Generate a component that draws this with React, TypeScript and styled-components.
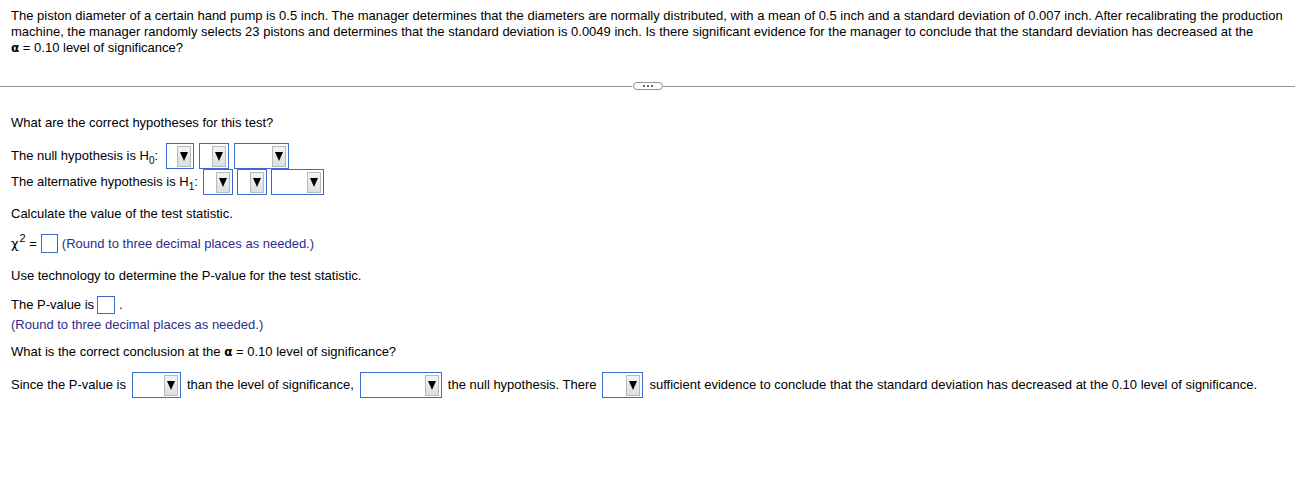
import React from "react";
import styled, { createGlobalStyle } from "styled-components";

const GlobalStyle = createGlobalStyle`
  body {
    margin: 0;
    background: #ffffff;
    font-family: "Liberation Sans", Arial, sans-serif;
    font-size: 13px;
    color: #000000;
  }
`;

const Page = styled.div`
  padding: 8px 8px 0 11px;
  line-height: 16px;
`;

const Question = styled.p`
  margin: 0;
  width: 1276px;
`;

const NoWrap = styled.span`
  white-space: nowrap;
`;

const Divider = styled.div`
  display: flex;
  align-items: center;
  margin: 25px -8px 0 -11px;
  height: 10px;
`;

const Rule = styled.div`
  flex: 1;
  height: 1px;
  background: #8e939b;
`;

const Pill = styled.div`
  width: 28px;
  height: 6px;
  border: 1.5px solid #8e939b;
  border-radius: 5px;
  display: flex;
  align-items: center;
  justify-content: center;
  gap: 2px;
  margin-left: 1px;
`;

const Dot = styled.span`
  width: 2px;
  height: 2px;
  background: #5d6470;
`;

const Section = styled.div<{ top: number }>`
  margin-top: ${({ top }) => top}px;
`;

const Line = styled.div<{ top?: number }>`
  margin-top: ${({ top }) => top || 0}px;
  height: 16px;
  line-height: 16px;
  white-space: nowrap;
`;

const Row = styled.div<{ top?: number; h: number }>`
  display: flex;
  align-items: center;
  margin-top: ${({ top }) => top || 0}px;
  height: ${({ h }) => h}px;
  white-space: nowrap;
`;

const Label = styled.span`
  line-height: 16px;
`;

const Hint = styled.span`
  color: #2e2c8c;
`;

const Alpha = styled.b`
  font-family: "DejaVu Sans", sans-serif;
  font-size: 12px;
`;

const Sub = styled.sub`
  font-size: 10px;
  vertical-align: -4px;
  line-height: 0;
`;

const Sup = styled.sup`
  font-size: 11px;
  vertical-align: 6px;
  line-height: 0;
  margin-left: 1px;
`;

const Chi = styled.span`
  font-family: "DejaVu Sans", sans-serif;
  font-size: 13px;
`;

const Select = styled.span<{ w: number; ml?: number }>`
  display: inline-flex;
  justify-content: flex-end;
  align-items: center;
  box-sizing: border-box;
  width: ${({ w }) => w}px;
  height: 26px;
  margin-left: ${({ ml }) => (ml === undefined ? 4 : ml)}px;
  border: 1px solid #3a6acb;
  background: #ffffff;
  padding-right: 2px;
`;

const Arrow = styled.span`
  display: flex;
  align-items: center;
  justify-content: center;
  box-sizing: border-box;
  width: 14px;
  height: 21px;
  background: linear-gradient(#f3f3f3, #dedede);
  border: 1px solid #b9b9b9;
`;

const Tri = styled.span`
  width: 0;
  height: 0;
  border-left: 4.5px solid transparent;
  border-right: 4.5px solid transparent;
  border-top: 9px solid #000000;
`;

const Blank = styled.span<{ w: number; h: number; ml: number }>`
  display: inline-block;
  box-sizing: border-box;
  width: ${({ w }) => w}px;
  height: ${({ h }) => h}px;
  margin-left: ${({ ml }) => ml}px;
  margin-right: 4px;
  border: 1px solid #3a6acb;
  background: #ffffff;
`;

const Gap = styled.span`
  margin-left: 6px;
`;

function Dropdown({ w, ml }: { w: number; ml?: number }) {
  return (
    <Select w={w} ml={ml}>
      <Arrow>
        <Tri />
      </Arrow>
    </Select>
  );
}

export default function App() {
  return (
    <Page>
      <GlobalStyle />
      <Question>
        The piston diameter of a certain hand pump is 0.5 inch. The manager
        determines that the diameters are normally distributed, with a mean of
        0.5 inch and a standard deviation of 0.007 inch. After recalibrating the
        production machine, the manager randomly selects 23 pistons and
        determines that the standard deviation is 0.0049 inch. Is there
        significant evidence for the manager to conclude that the standard
        deviation has decreased at the{" "}
        <NoWrap>
          <Alpha>α</Alpha> = 0.10
        </NoWrap>{" "}
        level of significance?
      </Question>
      <Divider>
        <Rule />
        <Pill>
          <Dot />
          <Dot />
          <Dot />
        </Pill>
        <Rule />
      </Divider>
      <Section top={24}>
        <Line>What are the correct hypotheses for this test?</Line>
        <Row top={12} h={26}>
          <Label>
            The null hypothesis is H<Sub>0</Sub>:
          </Label>
          <Dropdown w={28} ml={8} />
          <Dropdown w={30} ml={5} />
          <Dropdown w={55} ml={5} />
        </Row>
        <Row h={26}>
          <Label>
            The alternative hypothesis is H<Sub>1</Sub>:
          </Label>
          <Dropdown w={30} ml={5} />
          <Dropdown w={30} />
          <Dropdown w={53} />
        </Row>
        <Line top={11}>Calculate the value of the test statistic.</Line>
        <Row top={12} h={19}>
          <Label>
            <Chi>χ</Chi>
            <Sup>2</Sup> =
          </Label>
          <Blank w={17} h={19} ml={4} />
          <Hint>(Round to three decimal places as needed.)</Hint>
        </Row>
        <Line top={15}>
          Use technology to determine the P-value for the test statistic.
        </Line>
        <Row top={12} h={18}>
          <Label>The P-value is</Label>
          <Blank w={18} h={18} ml={3} />
          <Label>.</Label>
        </Row>
        <Line top={3}>
          <Hint>(Round to three decimal places as needed.)</Hint>
        </Line>
        <Line top={11}>
          What is the correct conclusion at the <Alpha>α</Alpha> = 0.10 level of
          significance?
        </Line>
        <Row top={12} h={26}>
          <Label>Since the P-value is</Label>
          <Dropdown w={49} ml={6} />
          <Gap>than the level of significance,</Gap>
          <Dropdown w={82} ml={6} />
          <Gap>the null hypothesis. There</Gap>
          <Dropdown w={41} ml={6} />
          <Gap>
            sufficient evidence to conclude that the standard deviation has
            decreased at the 0.10 level of significance.
          </Gap>
        </Row>
      </Section>
    </Page>
  );
}
